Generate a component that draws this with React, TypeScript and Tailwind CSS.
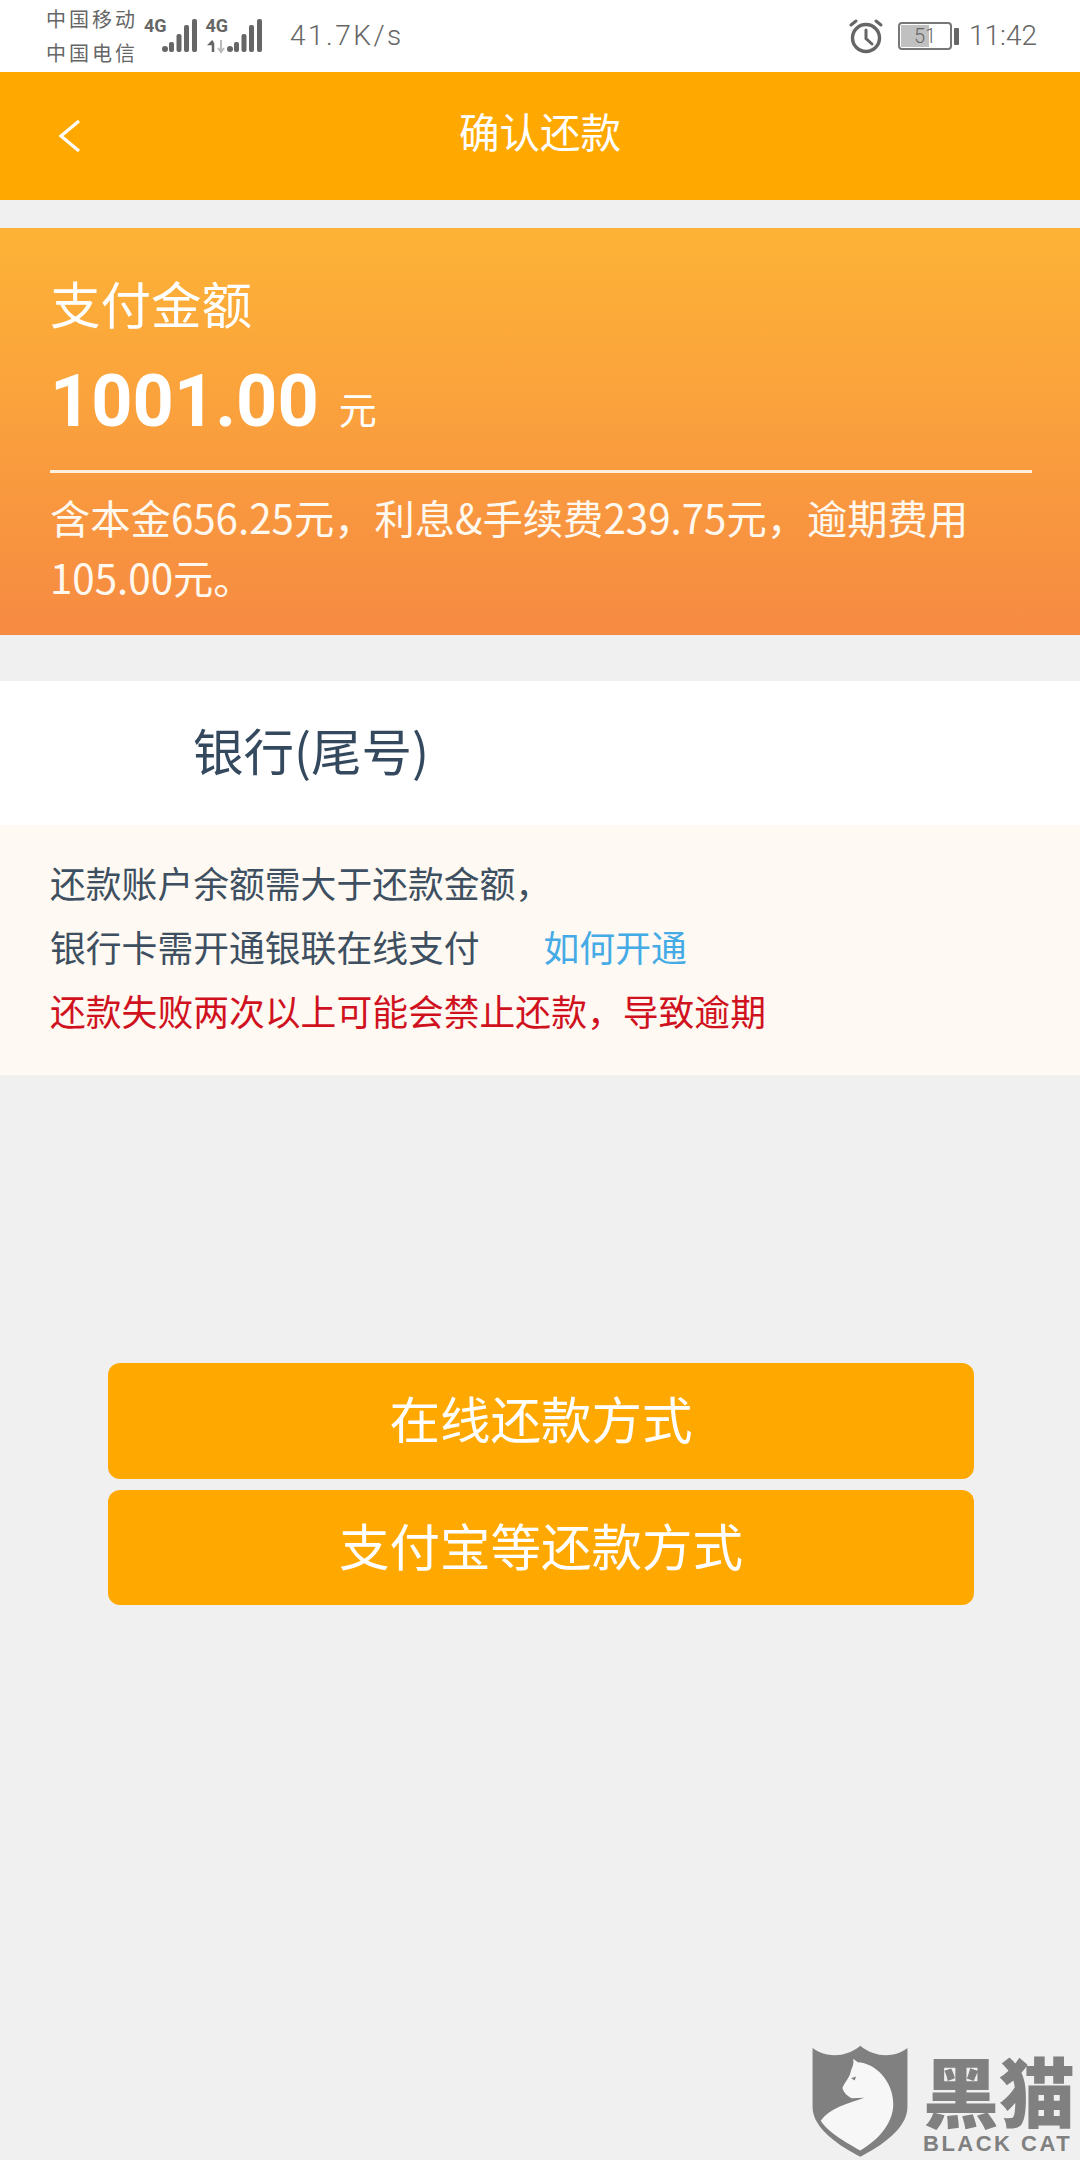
const carrierFont = "font-['Noto_Sans_CJK_SC',sans-serif]";

function Signal({ x }: { x: number }) {
  // dot plus four bars, growing to the right
  return (
    <g fill="#666">
      <circle cx={x + 2} cy={49} r={3} />
      <rect x={x + 6} y={42} width={5} height={10} rx={2} />
      <rect x={x + 13.5} y={34} width={5} height={18} rx={2} />
      <rect x={x + 21} y={25} width={5} height={27} rx={2} />
      <rect x={x + 29} y={19} width={5} height={33} rx={2} />
    </g>
  );
}

function StatusBar() {
  return (
    <div className="relative flex h-[72px] items-center bg-white pl-[46px] pr-[43px] text-[#666]">
      <div className={`${carrierFont} flex w-[96px] flex-col text-[20px] leading-[34px] tracking-[3px]`}>
        <span>中国移动</span>
        <span>中国电信</span>
      </div>
      <svg className="h-[72px] w-[126px] shrink-0" viewBox="142 0 126 72">
        <Signal x={163} />
        <Signal x={228} />
        <path d="M213 41l-3 3h3v8" stroke="#666" strokeWidth="2.5" fill="none" />
        <path d="M221 40v12M218 48l3 4 3-4" stroke="#bbb" strokeWidth="2" fill="none" />
      </svg>
      <div className="absolute left-[144px] top-[16px] flex w-[84px] justify-between font-['Roboto',sans-serif] text-[18px] font-bold leading-[19px]">
        <span>4G</span>
        <span>4G</span>
      </div>
      <span className="ml-[22px] font-['Roboto',sans-serif] text-[28px] font-light tracking-[2.5px]">41.7K/s</span>
      <div className="ml-auto flex items-center">
        <svg className="h-[36px] w-[36px]" viewBox="0 0 36 36" fill="none" stroke="#666" strokeLinecap="round">
          <circle cx="18" cy="20" r="13.5" strokeWidth="3.4" />
          <path d="M18 12v8.5l6 5.5" strokeWidth="3" />
          <path d="M3 7l5-4M33 7l-5-4" strokeWidth="3" />
        </svg>
        <div className="relative ml-[14px] flex h-[28px] w-[54px] items-center justify-center rounded-[4px] border-2 border-[#777] text-[20px] font-['Roboto',sans-serif] font-light">
          <div className="absolute left-[1px] top-[1px] h-[22px] w-[28px] bg-[#c0c0c0]" />
          <span className="relative">51</span>
        </div>
        <div className="ml-[2px] h-[17px] w-[5px] rounded-[1px] bg-[#666]" />
        <span className="ml-[10px] font-['Roboto',sans-serif] text-[28px] font-light">11:42</span>
      </div>
    </div>
  );
}

function Watermark() {
  return (
    <div className="absolute bottom-[3px] right-[3px] flex items-start text-[#808080]">
      <svg className="mr-[14px] mt-[-3px] h-[112px] w-[98px]" viewBox="92 76 294 340">
        <path d="M95 85C140 118 200 112 240 78C280 112 340 118 383 85V265C383 330 300 385 240 415C180 385 95 330 95 265Z" fill="#808080" />
        <path d="M218 118L232 128C285 130 340 185 340 255C340 320 285 370 240 396C195 372 135 335 120 305C150 265 200 255 252 236L215 238C200 232 185 215 186 205C192 190 205 178 210 160C214 145 222 135 218 118Z" fill="#f7f7f7" />
        <path d="M212 177l15-5-4 12z" fill="#808080" />
      </svg>
      <div className="flex w-[154px] flex-col items-start">
        <span className="font-['Noto_Sans_CJK_SC',sans-serif] text-[76px] font-black leading-[82px] whitespace-nowrap">黑猫</span>
        <span className="mt-[2px] font-['Liberation_Sans',sans-serif] text-[22px] font-bold leading-[24px] tracking-[2.5px] whitespace-nowrap">BLACK CAT</span>
      </div>
    </div>
  );
}

export default function App() {
  return (
    <div className="relative h-[2160px] w-[1080px] overflow-hidden bg-[#f0f0f0] font-['Noto_Sans_CJK_SC',sans-serif]">
      <StatusBar />

      {/* Header */}
      <div className="relative flex h-[128px] items-center justify-center bg-[#ffa800] pb-[9px] text-[40.5px] text-white">
        <svg className="absolute left-[57px] top-[46px] h-[36px] w-[26px]" viewBox="0 0 26 36" fill="none" stroke="#fff" strokeWidth="3.2">
          <path d="M22 3L4 18l18 15" />
        </svg>
        确认还款
      </div>

      {/* Amount card */}
      <div className="mt-[28px] h-[407px] bg-gradient-to-b from-[#fdb336] to-[#f68a42] pl-[50px] pr-[48px] pt-[44px] text-white">
        <div className="text-[50.5px] leading-[60px]">支付金额</div>
        <div className="mt-[24px] flex h-[92px] items-center">
          <span className="font-['Roboto',sans-serif] text-[72px] font-bold leading-[92px]">1001.00</span>
          <span className="ml-[20px] mt-[11px] text-[38px]">元</span>
        </div>
        <div className="mt-[22px] h-[3px] bg-[#fdf0dc]" />
        <p className="mt-[14px] text-[40.3px] leading-[60px] text-[#fff8ee]">含本金656.25元，利息&手续费239.75元，逾期费用105.00元。</p>
      </div>

      {/* Bank row */}
      <div className="mt-[46px] flex h-[144px] items-center bg-white pb-[6px] pl-[193px] text-[50.5px] text-[#34495e]">银行(尾号)</div>

      {/* Notes */}
      <div className="h-[250px] bg-[#fef9f2] px-[50px] pt-[25px] text-[35.8px] leading-[64px] text-[#3d4f60]">
        <div>还款账户余额需大于还款金额，</div>
        <div className="flex">
          <span>银行卡需开通银联在线支付</span>
          <span className="ml-[64px] text-[#45abe6]">如何开通</span>
        </div>
        <div className="text-[#d0121f]">还款失败两次以上可能会禁止还款，导致逾期</div>
      </div>

      {/* Buttons */}
      <div className="mt-[288px] flex flex-col gap-[11px] pl-[108px] pr-[106px]">
        <div className="flex h-[116px] items-center justify-center rounded-[12px] bg-[#ffa800] pb-[6px] text-[50.5px] text-white">在线还款方式</div>
        <div className="flex h-[115px] items-center justify-center rounded-[12px] bg-[#ffa800] pb-[6px] text-[50.5px] text-white">支付宝等还款方式</div>
      </div>

      <Watermark />
    </div>
  );
}
